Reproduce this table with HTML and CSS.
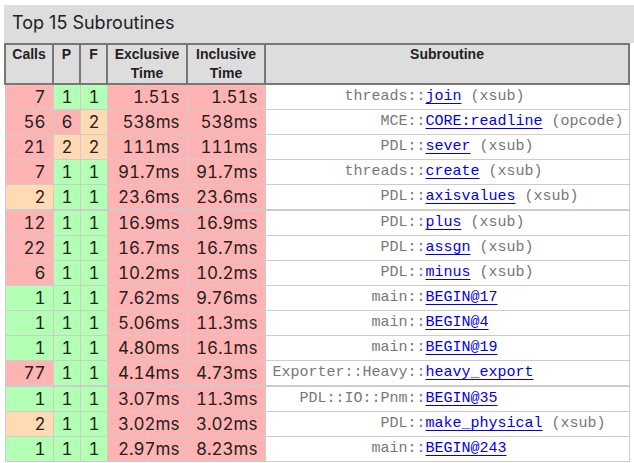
FILE: index.html
```html
<!DOCTYPE html>
<html>
<head>
<meta charset="utf-8">
<link rel="stylesheet" href="styles.css">
</head>
<body>
<div class="wrap">
  <div class="caption">Top 15 Subroutines</div>
  <table class="subs">
    <colgroup>
      <col class="c-calls"><col class="c-p"><col class="c-f"><col class="c-excl"><col class="c-incl"><col class="c-sub">
    </colgroup>
    <thead>
      <tr><th>Calls</th><th>P</th><th>F</th><th>Exclusive<br>Time</th><th>Inclusive<br>Time</th><th>Subroutine</th></tr>
    </thead>
    <tbody>
      <tr><td class="red">7</td><td class="grn">1</td><td class="grn">1</td><td class="red">1.51s</td><td class="red">1.51s</td><td class="sub"><span class="pkg">threads::</span><a href="#">join</a><span class="note"> (xsub)</span></td></tr>
      <tr><td class="red">56</td><td class="red">6</td><td class="org">2</td><td class="red">538ms</td><td class="red">538ms</td><td class="sub"><span class="pkg">MCE::</span><a href="#">CORE:readline</a><span class="note"> (opcode)</span></td></tr>
      <tr><td class="red">21</td><td class="org">2</td><td class="org">2</td><td class="red">111ms</td><td class="red">111ms</td><td class="sub"><span class="pkg">PDL::</span><a href="#">sever</a><span class="note"> (xsub)</span></td></tr>
      <tr><td class="red">7</td><td class="grn">1</td><td class="grn">1</td><td class="red">91.7ms</td><td class="red">91.7ms</td><td class="sub"><span class="pkg">threads::</span><a href="#">create</a><span class="note"> (xsub)</span></td></tr>
      <tr><td class="org">2</td><td class="grn">1</td><td class="grn">1</td><td class="red">23.6ms</td><td class="red">23.6ms</td><td class="sub"><span class="pkg">PDL::</span><a href="#">axisvalues</a><span class="note"> (xsub)</span></td></tr>
      <tr class="sep"><td class="red">12</td><td class="grn">1</td><td class="grn">1</td><td class="red">16.9ms</td><td class="red">16.9ms</td><td class="sub"><span class="pkg">PDL::</span><a href="#">plus</a><span class="note"> (xsub)</span></td></tr>
      <tr><td class="red">22</td><td class="grn">1</td><td class="grn">1</td><td class="red">16.7ms</td><td class="red">16.7ms</td><td class="sub"><span class="pkg">PDL::</span><a href="#">assgn</a><span class="note"> (xsub)</span></td></tr>
      <tr><td class="red">6</td><td class="grn">1</td><td class="grn">1</td><td class="red">10.2ms</td><td class="red">10.2ms</td><td class="sub"><span class="pkg">PDL::</span><a href="#">minus</a><span class="note"> (xsub)</span></td></tr>
      <tr><td class="grn">1</td><td class="grn">1</td><td class="grn">1</td><td class="red">7.62ms</td><td class="red">9.76ms</td><td class="sub"><span class="pkg">main::</span><a href="#">BEGIN@17</a></td></tr>
      <tr><td class="grn">1</td><td class="grn">1</td><td class="grn">1</td><td class="red">5.06ms</td><td class="red">11.3ms</td><td class="sub"><span class="pkg">main::</span><a href="#">BEGIN@4</a></td></tr>
      <tr><td class="grn">1</td><td class="grn">1</td><td class="grn">1</td><td class="red">4.80ms</td><td class="red">16.1ms</td><td class="sub"><span class="pkg">main::</span><a href="#">BEGIN@19</a></td></tr>
      <tr><td class="red">77</td><td class="grn">1</td><td class="grn">1</td><td class="red">4.14ms</td><td class="red">4.73ms</td><td class="sub"><span class="pkg">Exporter::Heavy::</span><a href="#">heavy_export</a></td></tr>
      <tr class="sep"><td class="grn">1</td><td class="grn">1</td><td class="grn">1</td><td class="red">3.07ms</td><td class="red">11.3ms</td><td class="sub"><span class="pkg">PDL::IO::Pnm::</span><a href="#">BEGIN@35</a></td></tr>
      <tr><td class="org">2</td><td class="grn">1</td><td class="grn">1</td><td class="red">3.02ms</td><td class="red">3.02ms</td><td class="sub"><span class="pkg">PDL::</span><a href="#">make_physical</a><span class="note"> (xsub)</span></td></tr>
      <tr><td class="grn">1</td><td class="grn">1</td><td class="grn">1</td><td class="red">2.97ms</td><td class="red">8.23ms</td><td class="sub"><span class="pkg">main::</span><a href="#">BEGIN@243</a></td></tr>
    </tbody>
  </table>
</div>
</body>
</html>
```

FILE: styles.css
```css
html, body {
  margin: 0;
  padding: 0;
  overflow: hidden;
  background: #fff;
}
.wrap {
  padding: 5px 0 0 4px;
  width: 630px;
}
.caption {
  background: #ddd;
  height: 38px;
  line-height: 36px;
  padding-left: 8px;
  font-family: Inter, "Liberation Sans", sans-serif;
  font-size: 18px;
  color: #222;
  box-sizing: border-box;
}
.subs {
  border-collapse: collapse;
  table-layout: fixed;
  width: 626px;
}
.c-calls { width: 48px; }
.c-p { width: 27px; }
.c-f { width: 27px; }
.c-excl { width: 80px; }
.c-incl { width: 78px; }
.subs th {
  background: #ddd;
  border: 2px solid #777;
  font-family: "Liberation Sans", Arial, sans-serif;
  font-weight: bold;
  font-size: 14px;
  line-height: 19px;
  color: #222;
  vertical-align: top;
  padding: 0 2px;
  height: 36px;
  text-align: center;
}
.subs td {
  border: 1px solid #ccc;
  font-family: Inter, "Liberation Sans", sans-serif;
  font-size: 17px;
  font-variant-numeric: tabular-nums;
  color: #222;
  line-height: 24px;
  height: 24px;
  padding: 0 7px 0 2px;
  text-align: right;
  white-space: nowrap;
}
.subs tr.sep td {
  border-top: 2px solid #ccc;
}
.red { background: #ffb3b3; }
.grn { background: #b3ffb3; }
.org { background: #ffdab3; }
.subs td.sub {
  text-align: left;
  padding-left: 7px;
  font-family: "Liberation Mono", "DejaVu Sans Mono", monospace;
  font-size: 15px;
  color: #777;
  background: #fff;
}
.pkg {
  display: inline-block;
  width: 153px;
  text-align: right;
}
.sub a {
  color: #00e;
  text-decoration: underline;
  text-underline-offset: 3px;
}
```
